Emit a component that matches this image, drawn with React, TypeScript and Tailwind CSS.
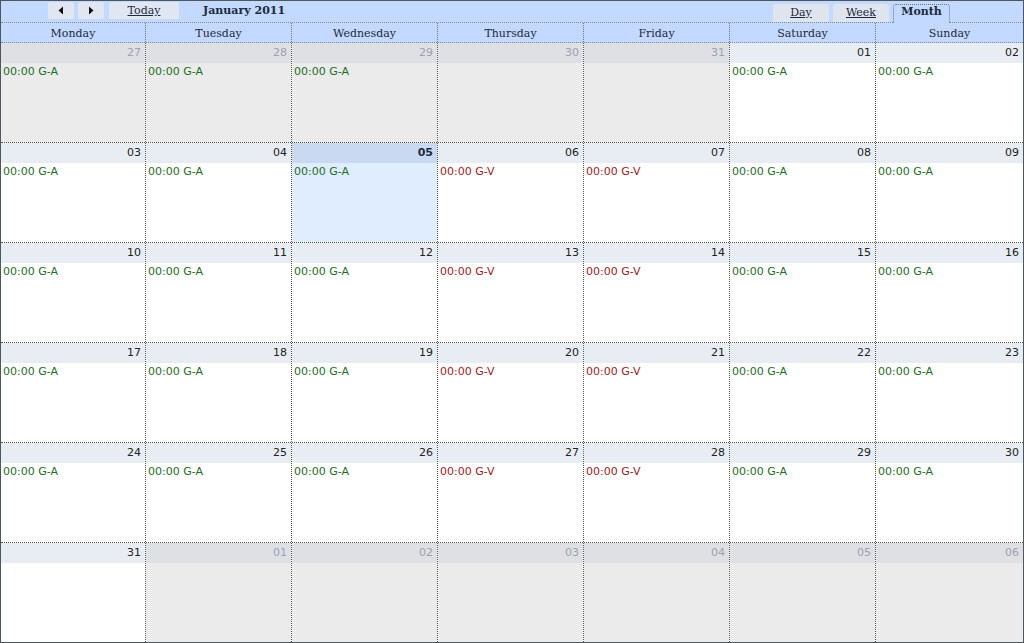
import React from 'react';

type Cell = { day: string; out?: boolean; today?: boolean; event?: 'A' | 'V' };

const dayNames = ['Monday', 'Tuesday', 'Wednesday', 'Thursday', 'Friday', 'Saturday', 'Sunday'];

function week(days: string[], outs: boolean[], events: (('A' | 'V') | undefined)[]): Cell[] {
  return days.map((day, i) => ({ day, out: outs[i], event: events[i] }));
}

const pattern: ('A' | 'V')[] = ['A', 'A', 'A', 'V', 'V', 'A', 'A'];
const inMonth = [false, false, false, false, false, false, false];

const weeks: Cell[][] = [
  week(['27', '28', '29', '30', '31', '01', '02'], [true, true, true, true, true, false, false], ['A', 'A', 'A', undefined, undefined, 'A', 'A']),
  week(['03', '04', '05', '06', '07', '08', '09'], inMonth, pattern),
  week(['10', '11', '12', '13', '14', '15', '16'], inMonth, pattern),
  week(['17', '18', '19', '20', '21', '22', '23'], inMonth, pattern),
  week(['24', '25', '26', '27', '28', '29', '30'], inMonth, pattern),
  week(['31', '01', '02', '03', '04', '05', '06'], [false, true, true, true, true, true, true], []),
];
weeks[1][2].today = true;

const serif = "font-['DejaVu_Serif',serif]";
const sans = "font-['DejaVu_Sans',sans-serif]";

function Arrow({ dir }: { dir: 'left' | 'right' }) {
  return (
    <svg width="6" height="9" viewBox="0 0 6 9">
      {dir === 'left' ? <path d="M5 0.5 L0.5 4.5 L5 8.5 Z" fill="#111" /> : <path d="M1 0.5 L5.5 4.5 L1 8.5 Z" fill="#111" />}
    </svg>
  );
}

export default function App() {
  return (
    <div className={`w-[1024px] h-[643px] border border-[#4c5860] bg-[#c3d9ff] flex flex-col overflow-hidden ${serif} text-[11px]`}>
      {/* toolbar */}
      <div className="h-[21px] flex items-end relative">
        <div className="flex items-center gap-[4px] pl-[47px] self-start pt-[1px]">
          <button className="w-[26px] h-[17px] rounded-[2px] bg-[#e1e7f2] grid place-items-center"><Arrow dir="left" /></button>
          <button className="w-[26px] h-[17px] rounded-[2px] bg-[#e1e7f2] grid place-items-center"><Arrow dir="right" /></button>
          <button className="ml-[1px] w-[70px] h-[17px] rounded-[2px] bg-[#e1e7f2] text-[#1c2a40] underline leading-[17px]">Today</button>
          <span className="ml-[20px] font-bold text-[#1c2a40] leading-[17px]">January 2011</span>
        </div>
        <div className="ml-auto mr-[73px] flex items-end gap-[4px] h-[18px]">
          <span className="w-[56px] h-[18px] rounded-t-[3px] bg-[#dfe5ee] text-center underline text-[#1c2a40] leading-[17px]">Day</span>
          <span className="w-[56px] h-[18px] rounded-t-[3px] bg-[#dfe5ee] text-center underline text-[#1c2a40] leading-[17px]">Week</span>
          <span className="w-[57px] h-[19px] -mb-[1px] rounded-t-[3px] border border-b-0 border-dotted border-[#6b7685] bg-[#c3d9ff] text-center font-bold text-[#1c2a40] leading-[13px] relative z-10">Month</span>
        </div>
      </div>

      {/* day names */}
      <div className="grid grid-cols-[145px_repeat(5,146px)_147px] border-y border-dotted border-[#7d8899] h-[21px]">
        {dayNames.map((d, i) => (
          <div key={d} className={`text-center text-[#1c2a40] leading-[21px] ${i < 6 ? 'border-r border-dotted border-[#6b7685]' : ''}`}>
            {d}
          </div>
        ))}
      </div>

      {/* weeks */}
      <div className="flex-1 flex flex-col bg-white">
        {weeks.map((w, wi) => (
          <div
            key={wi}
            className={`grid grid-cols-[145px_repeat(5,146px)_147px] ${wi < 5 ? 'h-[100px] border-b border-dotted border-[#555]' : 'h-[99px]'}`}
          >
            {w.map((c, ci) => (
              <div key={ci} className={`flex flex-col ${ci < 6 ? 'border-r border-dotted border-[#555]' : ''}`}>
                <div
                  className={`h-[20px] shrink-0 text-right pr-[4px] leading-[20px] ${sans} ${
                    c.today ? 'bg-[#c9d9f2] text-[#1c2a40] font-bold' : c.out ? 'bg-[#dfe0e3] text-[#9aa3b2]' : 'bg-[#e8edf3] text-[#222]'
                  }`}
                >
                  {c.day}
                </div>
                <div className={`flex-1 pl-[2px] pt-[1px] leading-[16px] ${sans} ${c.today ? 'bg-[#e0ecff]' : c.out ? 'bg-[#ebebeb]' : 'bg-white'}`}>
                  {c.event === 'A' && <span className="text-[#1f6e1f]">00:00 G-A</span>}
                  {c.event === 'V' && <span className="text-[#a11b1b]">00:00 G-V</span>}
                </div>
              </div>
            ))}
          </div>
        ))}
      </div>
    </div>
  );
}
